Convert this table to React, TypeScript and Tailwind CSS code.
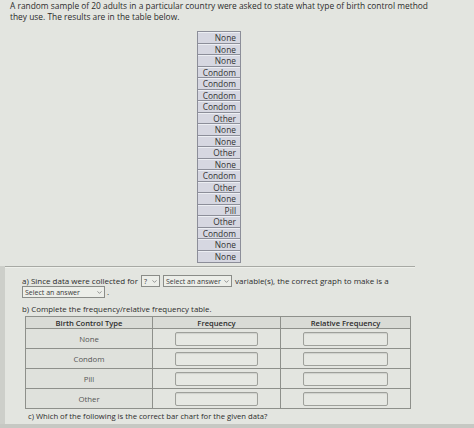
import React from "react";
import { ChevronDown } from "lucide-react";

const data = [
  "None", "None", "None", "Condom", "Condom", "Condom", "Condom", "Other", "None", "None",
  "Other", "None", "Condom", "Other", "None", "Pill", "Other", "Condom", "None", "None",
];

const types = ["None", "Condom", "Pill", "Other"];

const Select: React.FC<{ label: string; w: string }> = ({ label, w }) => {
  return (
    <span
      className={`inline-flex items-center justify-between h-[12px] ${w} border border-[#8a8c88] bg-[#eceee9] pl-[2px] pr-[1px] text-[7px] leading-none text-[#3a3a3a] align-middle whitespace-nowrap overflow-hidden`}
    >
      <span>{label}</span>
      <ChevronDown size={7} strokeWidth={2} className="text-[#555] shrink-0" />
    </span>
  );
};

export default function App() {
  return (
    <div
      className="w-[474px] h-[428px] overflow-hidden bg-[#e3e5e0] text-[#2c2c2c] flex flex-col"
      style={{ fontFamily: '"Open Sans", "Noto Sans", sans-serif' }}
    >
      <p className="pl-[10px] pr-[40px] text-[8.4px] leading-[11px] font-medium">
        A random sample of 20 adults in a particular country were asked to state what type of birth control method they use. The results are in the table below.
      </p>

      <div className="mt-[9px] ml-[197px] w-[44px] border border-[#8c8e99] flex flex-col">
        {data.map((d, i) => (
          <div
            key={i}
            className="h-[11.5px] border-b last:border-b-0 border-[#8c8e99] bg-[#d6d7e1] shadow-[inset_0_1px_0_#eceef3] text-right pr-[4px] text-[8.4px] leading-[11.5px] font-medium text-[#333]"
          >
            {d}
          </div>
        ))}
      </div>

      <div className="flex-1 flex flex-col border-l-[5px] border-[#cdcfca] mt-[3px]">
        <div className="w-[410px] h-[2px] border-t border-[#a7a9a4] bg-[#eef0eb]" />

        <div className="pl-[17px] mt-[7px] text-[8px] leading-[12px] font-medium">
          <div className="flex items-center gap-[3px] whitespace-nowrap">
            <span>a) Since data were collected for</span>
            <Select label="?" w="w-[19px]" />
            <Select label="Select an answer" w="w-[69px]" />
            <span>variable(s), the correct graph to make is a</span>
          </div>
          <div className="flex items-center gap-[2px] -mt-[1px]">
            <Select label="Select an answer" w="w-[83px]" />
            <span>.</span>
          </div>

          <div className="mt-[5px] text-[7.9px]">b) Complete the frequency/relative frequency table.</div>

          <table className="mt-[1px] ml-[3px] border-collapse border border-[#8e908b] text-[7.6px]">
            <thead>
              <tr className="h-[12px] bg-[#d9dbd6]">
                <th className="w-[127px] border border-[#8e908b] font-semibold leading-[10px]">Birth Control Type</th>
                <th className="w-[128px] border border-[#8e908b] font-semibold leading-[10px]">Frequency</th>
                <th className="w-[130px] border border-[#8e908b] font-semibold leading-[10px]">Relative Frequency</th>
              </tr>
            </thead>
            <tbody>
              {types.map((t) => (
                <tr key={t} className="h-[20px]">
                  <td className="border border-[#8e908b] bg-[#dfe1dc] text-center text-[#555] text-[7.8px] font-normal">{t}</td>
                  <td className="border border-[#8e908b]">
                    <div className="mx-auto w-[83px] h-[14px] rounded-[2px] border border-[#9ea09b] bg-[#e6e8e3] shadow-[inset_0_1px_1px_#cfd1cc]" />
                  </td>
                  <td className="border border-[#8e908b]">
                    <div className="mx-auto w-[85px] h-[14px] rounded-[2px] border border-[#9ea09b] bg-[#e6e8e3] shadow-[inset_0_1px_1px_#cfd1cc]" />
                  </td>
                </tr>
              ))}
            </tbody>
          </table>

          <div className="mt-[1px] ml-[6px] text-[7.7px]">c) Which of the following is the correct bar chart for the given data?</div>
        </div>
        <div className="flex-1" />
        <div className="h-[4px] -ml-[5px] bg-[#c6c8c3]" />
      </div>
    </div>
  );
}
